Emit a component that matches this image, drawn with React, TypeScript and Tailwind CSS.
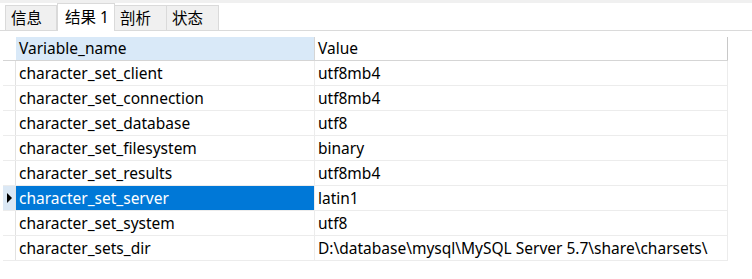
const rows: [string, string][] = [
  ["character_set_client", "utf8mb4"],
  ["character_set_connection", "utf8mb4"],
  ["character_set_database", "utf8"],
  ["character_set_filesystem", "binary"],
  ["character_set_results", "utf8mb4"],
  ["character_set_server", "latin1"],
  ["character_set_system", "utf8"],
  ["character_sets_dir", "D:\\database\\mysql\\MySQL Server 5.7\\share\\charsets\\"],
];

const tabs = ["信息", "结果 1", "剖析", "状态"];
const selected = 5;

export default function App() {
  return (
    <div
      className="w-[752px] h-[279px] bg-white text-[15.5px] text-black overflow-hidden"
      style={{ fontFamily: '"Noto Sans", "Noto Sans CJK SC", sans-serif' }}
    >
      <div className="h-[3px] bg-[#f0f0f0]" />
      <div className="flex items-end h-[28px] pl-[5px] border-b border-[#dadada]">
        {tabs.map((t, i) =>
          i === 1 ? (
            <div
              key={t}
              className="w-[58px] h-[28px] -mb-px bg-white border-x border-t border-[#dadada] flex items-center pl-[7px] leading-none"
            >
              {t}
            </div>
          ) : (
            <div
              key={t}
              className="w-[52px] h-[25px] bg-[#f0f0f0] border-r border-t border-[#dadada] first:border-l flex items-center pl-[5px] pt-px leading-none"
            >
              {t}
            </div>
          )
        )}
      </div>

      <div className="mt-[6px] ml-[3px] w-[725px]">
        <div className="flex h-[24px] border-b border-[#d5d5d5]">
          <div className="w-[13px] shrink-0" />
          <div className="w-[299px] shrink-0 bg-[#d9e9f8] border-r border-[#d5d5d5] flex items-center pl-[3px] pt-px leading-none">
            Variable_name
          </div>
          <div className="flex-1 border-r border-[#c8c8c8] flex items-center pl-[3px] pt-px leading-none">
            Value
          </div>
        </div>
        {rows.map(([name, value], i) => {
          const sel = i === selected;
          return (
            <div key={name} className="flex h-[25px] border-b border-[#ececec]">
              <div
                className={`w-[13px] shrink-0 border-r border-[#e2e2e2] flex items-center justify-center ${
                  sel ? "bg-[#dbe8f5]" : ""
                }`}
              >
                {sel && (
                  <svg width="5" height="10" viewBox="0 0 5 10">
                    <path d="M0 0 L5 5 L0 10 Z" fill="#000" />
                  </svg>
                )}
              </div>
              <div
                className={`w-[299px] shrink-0 border-r border-[#ececec] flex items-center pl-[3px] pt-px leading-none ${
                  sel ? "bg-[#0078d7] text-white" : ""
                }`}
              >
                {name}
              </div>
              <div className="flex-1 border-r border-[#ececec] flex items-center pl-[3px] pt-px leading-none whitespace-nowrap">
                {value}
              </div>
            </div>
          );
        })}
      </div>
    </div>
  );
}
